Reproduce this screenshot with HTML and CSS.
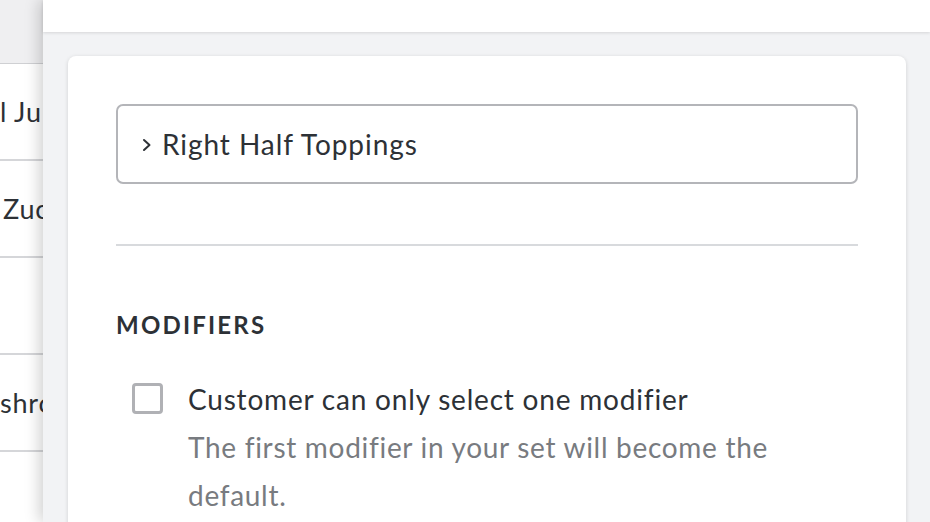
FILE: index.html
```html
<!DOCTYPE html>
<html lang="en">
<head>
    <meta charset="UTF-8">
    <meta name="viewport" content="width=device-width, initial-scale=1.0">
    <title>Edit Item - Modifiers</title>
    <link rel="stylesheet" href="styles.css">
</head>
<body>
    <div class="screen">
        <!-- list behind the sheet, mostly covered -->
        <div class="item-list">
            <div class="list-header"></div>
            <div class="list-row">l Jumbo Shrimp</div>
            <div class="list-row row-zuc">Zucchini Fries</div>
            <div class="list-row"></div>
            <div class="list-row">shrooms</div>
            <div class="list-row"></div>
        </div>

        <div class="sheet">
            <div class="sheet-header"></div>
            <div class="sheet-body">
                <div class="card">
                    <button class="collapse-btn">
                        <svg class="chevron" width="10" height="14" viewBox="0 0 10 14">
                            <path d="M2 2 L7.5 7 L2 12" fill="none" stroke="#2d3136" stroke-width="2" stroke-linecap="round" stroke-linejoin="round"/>
                        </svg>
                        <span>Right Half Toppings</span>
                    </button>

                    <hr class="divider">

                    <h3 class="section-title">MODIFIERS</h3>

                    <label class="option">
                        <span class="checkbox"></span>
                        <span class="option-text">
                            <span class="option-label">Customer can only select one modifier</span>
                            <span class="option-help">The first modifier in your set will become the default.</span>
                        </span>
                    </label>
                </div>
            </div>
        </div>
    </div>
</body>
</html>
```

FILE: styles.css
```css
body {
    margin: 0;
    font-family: Lato, "Open Sans", sans-serif;
    color: #2d3136;
    background-color: #ffffff;
}

.screen {
    position: relative;
    width: 930px;
    height: 522px;
    overflow: hidden;
}

.item-list {
    width: 300px;
    height: 100%;
    background-color: #ffffff;
}

.list-header {
    height: 63px;
    background-color: #efeff1;
    border-bottom: 1px solid #cfd0d3;
}

.list-row {
    height: 95px;
    display: flex;
    align-items: center;
    font-size: 27px;
    letter-spacing: 0.8px;
    white-space: nowrap;
    border-bottom: 2px solid #d5d6d9;
    color: #2d3136;
}

.row-zuc {
    padding-left: 3px;
}

/* the sheet lies over the list */
.sheet {
    position: absolute;
    top: 0;
    left: 43px;
    right: 0;
    bottom: 0;
    background-color: #f2f3f5;
    box-shadow: -4px 0 14px rgba(0, 0, 0, 0.18);
    display: flex;
    flex-direction: column;
}

.sheet-header {
    height: 32px;
    flex-shrink: 0;
    background-color: #ffffff;
    box-shadow: 0 1px 3px rgba(0, 0, 0, 0.12);
    position: relative;
    z-index: 1;
}

.sheet-body {
    flex: 1;
    padding: 24px 24px 0 25px;
}

.card {
    background-color: #ffffff;
    border-radius: 8px;
    box-shadow: 0 1px 4px rgba(0, 0, 0, 0.14);
    padding: 48px 48px 40px 48px;
    height: 100%;
    box-sizing: border-box;
}

.collapse-btn {
    display: flex;
    align-items: center;
    width: 100%;
    height: 80px;
    padding: 0 0 0 24px;
    border: 2px solid #b4b5b9;
    border-radius: 7px;
    background-color: #ffffff;
    font-family: inherit;
    font-size: 28px;
    letter-spacing: 0.95px;
    color: #2d3136;
    text-align: left;
    box-sizing: border-box;
}

.chevron {
    margin-right: 10px;
    margin-top: 2px;
}

.divider {
    border: none;
    height: 2px;
    background-color: #d8dadd;
    margin: 60px 0 0 0;
}

.section-title {
    margin: 63px 0 0 0;
    font-size: 24px;
    font-weight: bold;
    letter-spacing: 2.2px;
    color: #2d3136;
    line-height: 32px;
}

.option {
    display: flex;
    align-items: flex-start;
    margin-top: 41px;
    padding-left: 16px;
}

.checkbox {
    width: 31px;
    height: 31px;
    border: 3px solid #b0b1b5;
    border-radius: 4px;
    box-sizing: border-box;
    flex-shrink: 0;
    margin-top: 1px;
    margin-right: 25px;
}

.option-text {
    display: flex;
    flex-direction: column;
}

.option-label {
    font-size: 28px;
    line-height: 34px;
    letter-spacing: 0.8px;
    color: #2d3136;
}

.option-help {
    font-size: 28px;
    line-height: 48px;
    letter-spacing: 0.7px;
    color: #787b80;
    max-width: 600px;
    margin-top: 7px;
}
```
